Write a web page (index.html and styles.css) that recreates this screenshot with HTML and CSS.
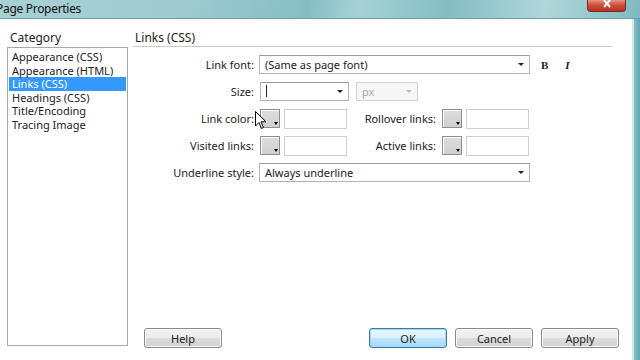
FILE: index.html
```html
<!DOCTYPE html>
<html>
    <head>
        <title>Page Properties</title>
        <meta http-equiv="Content-Type" content="text/html; charset=UTF-8">
        <link rel="stylesheet" href="styles.css">
    </head>
    <body>
        <div class="window">
            <div class="titlebar">
                <span class="title">Page Properties</span>
                <div class="close-btn">
                    <svg width="10" height="8" viewBox="0 0 10 8"><path d="M2 0 L8 7 M8 0 L2 7" stroke="#fff" stroke-width="2"/></svg>
                </div>
            </div>

            <div class="frame">
                <div class="client">
                    <!-- category list -->
                    <div class="category">
                        <div class="cat-title">Category</div>
                        <ul class="cat-list">
                            <li>Appearance (CSS)</li>
                            <li>Appearance (HTML)</li>
                            <li class="selected">Links (CSS)</li>
                            <li>Headings (CSS)</li>
                            <li>Title/Encoding</li>
                            <li>Tracing Image</li>
                        </ul>
                    </div>

                    <!-- panel -->
                    <div class="panel">
                        <div class="panel-title">Links (CSS)</div>

                        <div class="form">
                            <div class="row">
                                <label class="lbl">Link font:</label>
                                <div class="select wide">(Same as page font)<span class="arrow"></span></div>
                                <span class="style-btn bold">B</span>
                                <span class="style-btn italic">I</span>
                            </div>

                            <div class="row">
                                <label class="lbl">Size:</label>
                                <div class="select size"><span class="caret"></span><span class="arrow"></span></div>
                                <div class="select unit disabled">px<span class="arrow"></span></div>
                            </div>

                            <div class="row">
                                <label class="lbl">Link color:</label>
                                <div class="swatch"><span class="arrow small"></span></div>
                                <div class="textbox"></div>
                                <label class="lbl2">Rollover links:</label>
                                <div class="swatch"><span class="arrow small"></span></div>
                                <div class="textbox"></div>
                                <svg class="cursor" width="12" height="19" viewBox="0 0 12 19">
                                    <path d="M0.5 0.5 L0.5 15 L4 11.5 L6.5 17.5 L8.5 16.5 L6 10.8 L11 10.8 Z" fill="#fff" stroke="#000" stroke-width="1"/>
                                </svg>
                            </div>

                            <div class="row">
                                <label class="lbl">Visited links:</label>
                                <div class="swatch"><span class="arrow small"></span></div>
                                <div class="textbox"></div>
                                <label class="lbl2">Active links:</label>
                                <div class="swatch"><span class="arrow small"></span></div>
                                <div class="textbox"></div>
                            </div>

                            <div class="row">
                                <label class="lbl">Underline style:</label>
                                <div class="select wide">Always underline<span class="arrow"></span></div>
                            </div>
                        </div>

                        <div class="buttons">
                            <button class="btn help">Help</button>
                            <button class="btn ok">OK</button>
                            <button class="btn">Cancel</button>
                            <button class="btn">Apply</button>
                        </div>
                    </div>
                </div>
                <div class="edge"></div>
            </div>
        </div>
    </body>
</html>
```

FILE: styles.css
```css
body {
    margin: 0;
    padding: 0;
    font-family: "Noto Sans", "Open Sans", sans-serif;
    font-size: 11px;
    color: #222;
}

.window {
    width: 640px;
    height: 360px;
    display: flex;
    flex-direction: column;
    overflow: hidden;
}

/* title bar */
.titlebar {
    height: 18px;
    display: flex;
    align-items: flex-start;
    border-bottom: 1px solid #6e9ea5;
    background: linear-gradient(100deg, #a9d1d5 0%, #9ccacf 30%, #86bdc4 48%, #a6d2d5 56%, #84bcc3 70%, #b0d7da 85%, #7fb9c0 100%);
}

.title {
    font-size: 12px;
    letter-spacing: -0.3px;
    margin-left: -4px;
    color: #111;
    line-height: 17px;
}

.close-btn {
    margin-left: auto;
    margin-right: 14px;
    width: 37px;
    height: 11px;
    display: flex;
    align-items: center;
    justify-content: center;
    border: 1px solid #7a2a22;
    border-top: none;
    border-radius: 0 0 4px 4px;
    background: linear-gradient(#e59383, #cc4a38 50%, #b43424);
}

.close-btn svg {
    margin-top: -3px;
}

.frame {
    flex: 1;
    display: flex;
}

.client {
    flex: 1;
    background: #fff;
    display: grid;
    grid-template-columns: 121px 1fr;
    column-gap: 5px;
    padding: 12px 12px 12px 7px;
    border-right: 2px solid #d4e8ec;
}

.edge {
    width: 6px;
    background: linear-gradient(90deg, #86c0c7, #5fa6ae);
}

/* category */
.category {
    display: flex;
    flex-direction: column;
}

.cat-title {
    font-size: 12px;
    height: 16px;
    line-height: 14px;
    padding-left: 3px;
}

.cat-list {
    flex: 1;
    list-style: none;
    margin: 0 0 2px 0;
    padding: 2px 1px;
    border: 1px solid #a9a9a9;
}

.cat-list li {
    height: 13.6px;
    line-height: 13px;
    padding-left: 3px;
}

.cat-list li.selected {
    background-color: #3399ff;
    color: #fff;
}

/* panel */
.panel {
    display: flex;
    flex-direction: column;
}

.panel-title {
    font-size: 12px;
    height: 15px;
    line-height: 14px;
    padding-left: 2px;
    margin-right: 8px;
    border-bottom: 1px solid #c8c8c8;
}

.form {
    flex: 1;
    display: flex;
    flex-direction: column;
    gap: 8px;
    padding-top: 8px;
}

.row {
    position: relative;
    display: flex;
    align-items: center;
    height: 19px;
}

.lbl {
    width: 121px;
    margin-right: 5px;
    text-align: right;
}

.lbl2 {
    width: 89px;
    margin-right: 5px;
    text-align: right;
}

.select {
    position: relative;
    box-sizing: border-box;
    height: 19px;
    line-height: 17px;
    padding-left: 5px;
    border: 1px solid #b4b4b4;
    border-top-color: #9a9a9a;
    background: #fff;
}

.select.wide {
    width: 271px;
}

.select.size {
    width: 89px;
    margin-left: 1px;
}

.select.unit {
    width: 62px;
    margin-left: 7px;
}

.select.disabled {
    color: #a8a8a8;
    border-color: #d4d4d4;
    background: #f6f6f6;
}

.arrow {
    position: absolute;
    right: 5px;
    top: 7px;
    width: 0;
    height: 0;
    border-left: 3px solid transparent;
    border-right: 3px solid transparent;
    border-top: 3px solid #222;
}

.disabled .arrow {
    border-top-color: #bbb;
}

.caret {
    display: inline-block;
    width: 1px;
    height: 12px;
    margin-top: 2px;
    background: #222;
    vertical-align: top;
}

.style-btn {
    font-family: "Liberation Serif", serif;
    font-size: 11px;
    font-weight: bold;
    margin-left: 11px;
}

.style-btn.italic {
    font-style: italic;
    margin-left: 17px;
}

.swatch {
    position: relative;
    box-sizing: border-box;
    width: 20px;
    height: 19px;
    margin-left: 1px;
    border: 1px solid #8e8e8e;
    box-shadow: inset 1px 1px 0 #fff;
    background: linear-gradient(#dedede, #cfcfcf);
}

.arrow.small {
    right: 1px;
    top: auto;
    bottom: 2px;
    border-left-width: 2px;
    border-right-width: 2px;
    border-top-width: 3px;
    border-top-color: #000;
}

.textbox {
    box-sizing: border-box;
    width: 63px;
    height: 20px;
    margin-left: 4px;
    border: 1px solid #cfcfcf;
    background: #fff;
}

.cursor {
    position: absolute;
    left: 122px;
    top: 2px;
}

/* buttons */
.buttons {
    display: flex;
    gap: 8px;
    padding-right: 1px;
}

.btn {
    box-sizing: border-box;
    width: 78px;
    height: 20px;
    padding: 0;
    font-family: "Noto Sans", "Open Sans", sans-serif;
    font-size: 11px;
    color: #222;
    border: 1px solid #8a8a8a;
    border-radius: 3px;
    background: linear-gradient(#f3f3f3 0%, #ebebeb 50%, #dcdcdc 51%, #d2d2d2 100%);
    box-shadow: inset 0 0 0 1px #fbfbfb;
}

.btn.help {
    margin-left: 11px;
    margin-right: auto;
}

.btn.ok {
    border-color: #3d7bad;
    background: linear-gradient(#eaf6fd 0%, #d9f0fc 50%, #bee6fd 51%, #a7d9f5 100%);
    box-shadow: inset 0 0 0 1px #9fd6f2;
}
```
